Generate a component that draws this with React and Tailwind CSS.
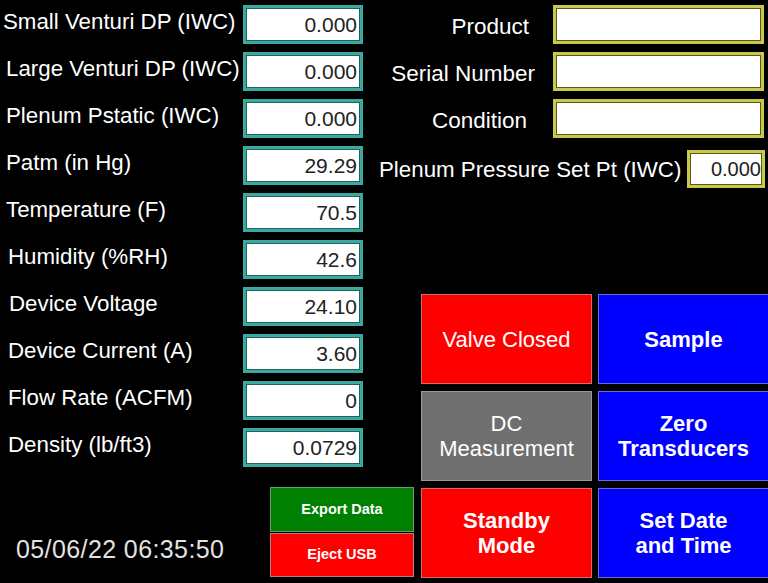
import React from 'react';

const READINGS = [
  { label: 'Small Venturi DP (IWC)', value: '0.000', pl: 'pl-[3px]' },
  { label: 'Large Venturi DP (IWC)', value: '0.000', pl: 'pl-[6px]' },
  { label: 'Plenum Pstatic (IWC)', value: '0.000', pl: 'pl-[6px]' },
  { label: 'Patm (in Hg)', value: '29.29', pl: 'pl-[6px]' },
  { label: 'Temperature (F)', value: '70.5', pl: 'pl-[6px]' },
  { label: 'Humidity (%RH)', value: '42.6', pl: 'pl-[8px]' },
  { label: 'Device Voltage', value: '24.10', pl: 'pl-[9px]' },
  { label: 'Device Current (A)', value: '3.60', pl: 'pl-[8px]' },
  { label: 'Flow Rate (ACFM)', value: '0', pl: 'pl-[8px]' },
  { label: 'Density (lb/ft3)', value: '0.0729', pl: 'pl-[8px]' },
];

const INFO = [
  { label: 'Product', pr: 'pr-[24px]' },
  { label: 'Serial Number', pr: 'pr-[18px]' },
  { label: 'Condition', pr: 'pr-[26px]' },
];

const ACTIONS = [
  { lines: ['Valve Closed'], color: 'bg-[#ff0000] border-[#d86a6a]', bold: false },
  { lines: ['Sample'], color: 'bg-[#0000ff] border-[#6a6ad8]', bold: true },
  { lines: ['DC', 'Measurement'], color: 'bg-[#6f6f6f] border-[#9a9a9a]', bold: false },
  { lines: ['Zero', 'Transducers'], color: 'bg-[#0000ff] border-[#6a6ad8]', bold: true },
  { lines: ['Standby', 'Mode'], color: 'bg-[#ff0000] border-[#d86a6a]', bold: true },
  { lines: ['Set Date', 'and Time'], color: 'bg-[#0000ff] border-[#6a6ad8]', bold: true },
];

const ReadingRow = ({ label, value, pl }) => (
  <div className="flex items-center h-[39px]">
    <div className={`w-[243px] ${pl} mb-[5px] text-[22.3px] text-white whitespace-nowrap`}>{label}</div>
    <div className="w-[120px] h-[39px] border-[3px] border-[#3aa9a0] bg-white shadow-[inset_0_0_0_1px_#24605a] flex items-center justify-end pr-[3px] text-[21px] text-[#222]">
      {value}
    </div>
  </div>
);

export default function App() {
  return (
    <div
      className="w-[768px] h-[583px] bg-black overflow-hidden flex"
      style={{ fontFamily: '"Liberation Sans", Arial, sans-serif' }}
    >
      {/* left readings column */}
      <div className="w-[370px] flex-shrink-0 flex flex-col pt-[5px]">
        <div className="flex flex-col gap-2">
          {READINGS.map((r) => (
            <ReadingRow key={r.label} {...r} />
          ))}
        </div>
        <div className="w-[414px] flex items-end mt-[20px]">
          <div className="w-[270px] pl-[16px] pb-[9px] text-[25px] tracking-[0.4px] text-[#e2e2e2] whitespace-nowrap">
            05/06/22 06:35:50
          </div>
          <div className="w-[144px] flex flex-col gap-px">
            <div className="h-[45px] bg-[#008000] border border-[#6c9c6c] flex items-center justify-center text-white font-bold text-[14.5px]">
              Export Data
            </div>
            <div className="h-[44px] bg-[#ff0000] border border-[#b08080] flex items-center justify-center text-white font-bold text-[14.5px]">
              Eject USB
            </div>
          </div>
        </div>
      </div>

      {/* right column */}
      <div className="flex-1 flex flex-col pt-[5px]">
        <div className="flex flex-col gap-[8px]">
          {INFO.map((f) => (
            <div key={f.label} className="flex items-center h-[39px]">
              <div className={`w-[183px] text-right ${f.pr} mt-[4px] text-[22.5px] text-white whitespace-nowrap`}>{f.label}</div>
              <div className="w-[211px] h-[39px] border-[3px] border-[#c9c84a] bg-white shadow-[inset_0_0_0_1px_#5a5a20]" />
            </div>
          ))}
        </div>
        <div className="flex items-center h-[38px] mt-[12px] pl-[9px]">
          <div className="w-[308px] mt-[2px] text-[22.3px] text-white whitespace-nowrap">Plenum Pressure Set Pt (IWC)</div>
          <div className="w-[78px] h-[38px] border-[3px] border-[#c9c84a] bg-white shadow-[inset_0_0_0_1px_#5a5a20] flex items-center justify-end pr-[1px] text-[20px] text-[#222]">
            0.000
          </div>
        </div>

        <div className="ml-[51px] mt-[106px] grid grid-cols-[171px_171px] gap-x-[6px] gap-y-[7px]">
          {ACTIONS.map((a) => (
            <div
              key={a.lines.join(' ')}
              className={`h-[90px] border ${a.color} flex flex-col items-center justify-center text-white text-[22px] leading-[25px] ${a.bold ? 'font-bold' : 'font-normal'}`}
            >
              {a.lines.map((l) => (
                <span key={l}>{l}</span>
              ))}
            </div>
          ))}
        </div>
      </div>
    </div>
  );
}
